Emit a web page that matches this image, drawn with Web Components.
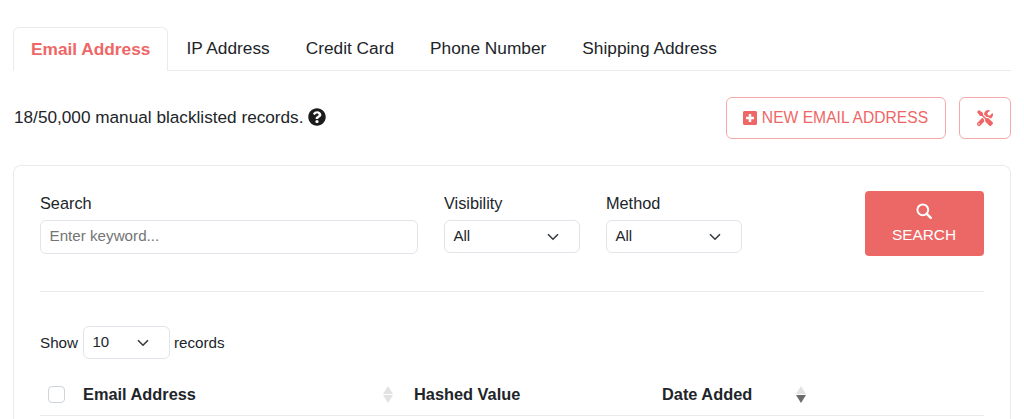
<!DOCTYPE html>
<html>
<head>
<meta charset="utf-8">
<title>Blacklist</title>
<style>
  html, body { margin: 0; height: 419px; overflow: hidden; background: #fff; }
  body { font-family: "Liberation Sans", Arial, sans-serif; font-size: 16px; color: #212529; }
</style>
</head>
<body>
<blacklist-page>
  <tab-bar>
    <tab-item active>Email Address</tab-item>
    <tab-item>IP Address</tab-item>
    <tab-item>Credit Card</tab-item>
    <tab-item>Phone Number</tab-item>
    <tab-item>Shipping Address</tab-item>
  </tab-bar>
  <quota-row></quota-row>
  <records-card>
    <filter-form></filter-form>
    <records-table></records-table>
  </records-card>
</blacklist-page>
<script>
const ICONS = {
  tools: ['0 0 512 512', 'M501.1 395.7L384 278.6c-23.1-23.1-57.6-27.6-85.4-13.9L192 158.1V96L64 0 0 64l96 128h62.1l106.6 106.6c-13.6 27.8-9.2 62.3 13.9 85.4l117.1 117.1c14.6 14.6 38.2 14.6 52.7 0l52.7-52.7c14.5-14.6 14.5-38.2-.1-52.7zM331.7 225c28.3 0 54.9 11 74.9 31l19.4 19.4c15.8-6.9 30.8-16.5 43.8-29.5 37.1-37.1 49.7-89.3 37.9-136.7-2.2-9-13.5-12.1-20.1-5.5l-74.4 74.4-67.9-11.3L334 98.9l74.4-74.4c6.6-6.6 3.4-17.9-5.7-20.2-47.4-11.7-99.6.9-136.6 37.9-28.5 28.5-41.9 66.1-41.2 103.6l82.1 82.1c8.1-1.9 16.5-2.9 24.7-2.9zm-103.9 82l-56.7-56.7L18.7 402.8c-25 25-25 65.5 0 90.5s65.5 25 90.5 0l123.6-123.6c-7.6-19.9-9.9-41.6-5-62.7zM64 472c-13.2 0-24-10.8-24-24 0-13.3 10.7-24 24-24s24 10.7 24 24c0 13.2-10.7 24-24 24z'],
  help: ['0 0 512 512', 'M504 256c0 136.997-111.043 248-248 248S8 392.997 8 256C8 119.083 119.043 8 256 8s248 111.083 248 248zM262.655 90c-54.497 0-89.255 22.957-116.549 63.758-3.536 5.286-2.353 12.415 2.715 16.258l34.699 26.31c5.205 3.947 12.621 3.008 16.665-2.122 17.864-22.658 30.113-35.797 57.303-35.797 20.429 0 45.698 13.148 45.698 32.958 0 14.976-12.363 22.667-32.534 33.976C247.128 238.528 216 254.941 216 296v4c0 6.627 5.373 12 12 12h56c6.627 0 12-5.373 12-12v-1.333c0-28.462 83.186-29.647 83.186-106.667 0-58.002-60.165-102-116.531-102zM256 338c-25.365 0-46 20.635-46 46 0 25.364 20.635 46 46 46s46-20.636 46-46c0-25.365-20.635-46-46-46z'],
  plus: ['0 0 448 448', 'M400 0H48C21.5 0 0 21.5 0 48v352c0 26.5 21.5 48 48 48h352c26.5 0 48-21.5 48-48V48c0-26.5-21.5-48-48-48zM352 252c0 6.6-5.4 12-12 12h-76v76c0 6.6-5.4 12-12 12h-56c-6.6 0-12-5.4-12-12v-76h-76c-6.6 0-12-5.4-12-12v-56c0-6.6 5.4-12 12-12h76v-76c0-6.6 5.4-12 12-12h56c6.6 0 12 5.4 12 12v76h76c6.6 0 12 5.4 12 12z']
};

function icon(name, size) {
  const [box, d] = ICONS[name];
  return `<svg width="${size}" height="${size}" viewBox="${box}" fill="currentColor" style="display:block;flex:none"><path d="${d}"/></svg>`;
}

// thinner ring than the solid glyph, same as the reference button
const searchIcon = `<svg width="16" height="16" viewBox="0 0 16 16" fill="none" stroke="currentColor" style="display:block"><circle cx="6.8" cy="6.8" r="5.4" stroke-width="2"/><path d="M10.8 10.800l4 4" stroke-width="2.400" stroke-linecap="round"/></svg>`;

// small helper so every element below is just a style + markup
function define(tag, html) {
  customElements.define(tag, class extends HTMLElement {
    constructor() {
      super();
      this.attachShadow({ mode: 'open' });
      this.shadowRoot.innerHTML = html;
    }
  });
}

define('blacklist-page', `
  <style>:host { display: block; height: 419px; box-sizing: border-box; overflow: hidden; padding: 27px 13.5px 0 13px; }</style>
  <slot></slot>`);

define('tab-bar', `
  <style>:host { display: flex; height: 44px; box-sizing: border-box; border-bottom: 1px solid #e9ecef; }</style>
  <slot></slot>`);

define('tab-item', `
  <style>
    :host { display: block; }
    div {
      height: 44px; box-sizing: border-box; padding: 0 18px; line-height: 42px; white-space: nowrap;
      font-size: 17.3px; color: #212529; border-radius: 6px 6px 0 0;
    }
    :host([active]) div { color: #ee6766; font-weight: 700; border: 1px solid #e9ecef; border-bottom: 0; background: #fff; padding: 0 17px; }
  </style>
  <div><slot></slot></div>`);

define('app-button', `
  <style>
    :host { display: block; }
    div {
      box-sizing: border-box; height: 42px; display: flex; align-items: center; justify-content: center; gap: 5px;
      border: 1px solid #f7a9a8; border-radius: 6px; color: #ee6766; font-size: 15.65px; background: #fff;
      white-space: nowrap;
    }
  </style>
  <div><slot></slot></div>`);

define('quota-row', `
  <style>
    :host { display: flex; align-items: center; justify-content: space-between; height: 42px; margin-top: 26px; }
    .text { display: flex; align-items: center; gap: 4px; font-size: 17.2px; padding: 0 0 2px 1px; }
    .text svg { color: #1c1c1c; }
    .actions { display: flex; gap: 13px; }
    .wide { width: 220px; }
    .square { width: 52px; }
  </style>
  <div class="text"><span>18/50,000 manual blacklisted records.</span>${icon('help', 18)}</div>
  <div class="actions">
    <app-button class="wide">${icon('plus', 14)}<span>NEW EMAIL ADDRESS</span></app-button>
    <app-button class="square">${icon('tools', 16)}</app-button>
  </div>`);

define('records-card', `
  <style>
    :host {
      display: block; margin-top: 26px; height: 254px; box-sizing: border-box; padding: 25px 26px 0;
      border: 1px solid #e9ecef; border-bottom: 0; border-radius: 8px 8px 0 0;
    }
  </style>
  <slot></slot>`);

define('select-box', `
  <style>
    :host { display: block; }
    div {
      box-sizing: border-box; width: 100%; height: 33px; display: flex; align-items: center; justify-content: space-between;
      border: 1px solid #e1e4e8; border-radius: 6px; padding: 0 20px 0 8.5px; font-size: 15px; background: #fff; color: #212529;
    }
    span { position: relative; top: -1px; }
    svg { display: block; }
  </style>
  <div><span><slot></slot></span><svg width="12" height="8" viewBox="0 0 12 8" fill="none" stroke="#343a40" stroke-width="1.6"><path d="M1 1.200l5 5 5-5"/></svg></div>`);

define('filter-form', `
  <style>
    :host { display: block; }
    .row { display: flex; height: 65px; }
    label { display: block; font-size: 16.3px; line-height: 20px; margin: 1.5px 0 7.5px; color: #212529; }
    .search { width: 378px; margin-right: 26px; }
    .vis { width: 136px; margin-right: 26px; }
    .method { width: 136px; }
    .input {
      box-sizing: border-box; height: 34px; line-height: 30px; border: 1px solid #e1e4e8; border-radius: 6px;
      padding: 0 8.5px; font-size: 15.2px; color: #757575;
    }
    .go {
      margin-left: auto; width: 119px; height: 65px; border-radius: 4px; background: #ec6866; color: #fff;
      display: flex; flex-direction: column; align-items: center; justify-content: center; gap: 7px; font-size: 15.4px;
    }
    .line { height: 1px; background: #e9ecef; margin-top: 35px; }
  </style>
  <div class="row">
    <div class="search"><label>Search</label><div class="input">Enter keyword...</div></div>
    <div class="vis"><label>Visibility</label><select-box>All</select-box></div>
    <div class="method"><label>Method</label><select-box>All</select-box></div>
    <div class="go">${searchIcon}<span>SEARCH</span></div>
  </div>
  <div class="line"></div>`);

define('sort-arrows', `
  <style>
    :host { display: block; width: 10px; }
    i { display: block; width: 0; height: 0; border-left: 5px solid transparent; border-right: 5px solid transparent; }
    .up { border-bottom: 8px solid #e2e2e2; margin-bottom: 1px; }
    .down { border-top: 8px solid #e2e2e2; }
    :host([desc]) .down { border-top-color: #6c6c6c; }
  </style>
  <i class="up"></i><i class="down"></i>`);

define('records-table', `
  <style>
    :host { display: block; margin-top: 34px; }
    .show { display: flex; align-items: center; gap: 5px; font-size: 15.2px; height: 33px; }
    select-box { width: 87px; }
    .show span:last-child { margin-left: -1px; }
    .head {
      display: grid; grid-template-columns: 43px 331px 248px 1fr; height: 38px; margin-top: 19px; box-sizing: border-box;
      padding-bottom: 5px; border-bottom: 1px solid #e9ecef; align-items: center; font-weight: 700; font-size: 16.35px;
    }
    .check { box-sizing: border-box; width: 17px; height: 17px; margin-left: 8px; border: 1px solid #ced4da; border-radius: 4px; }
    .cell { display: flex; align-items: center; }
    .email { justify-content: space-between; padding-right: 21px; }
    .date { gap: 44px; }
  </style>
  <div class="show"><span>Show</span><select-box>10</select-box><span>records</span></div>
  <div class="head">
    <div class="check"></div>
    <div class="cell email"><span>Email Address</span><sort-arrows></sort-arrows></div>
    <div class="cell"><span>Hashed Value</span></div>
    <div class="cell date"><span>Date Added</span><sort-arrows desc></sort-arrows></div>
  </div>`);
</script>
</body>
</html>
